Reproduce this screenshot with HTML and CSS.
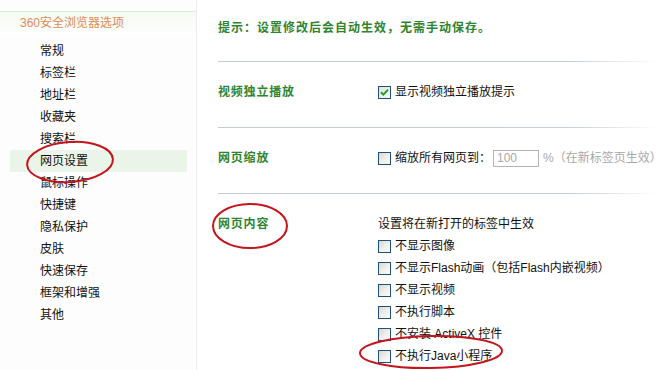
FILE: index.html
```html
<!DOCTYPE html>
<html lang="zh-CN">
<head>
<meta charset="utf-8">
<title>360安全浏览器选项</title>
<link rel="stylesheet" href="styles.css">
</head>
<body>
<div class="page">
  <aside class="sidebar">
    <div class="side-head">360安全浏览器选项</div>
    <ul class="menu">
      <li>常规</li>
      <li>标签栏</li>
      <li>地址栏</li>
      <li>收藏夹</li>
      <li>搜索栏</li>
      <li class="active">网页设置</li>
      <li>鼠标操作</li>
      <li>快捷键</li>
      <li>隐私保护</li>
      <li>皮肤</li>
      <li>快速保存</li>
      <li>框架和增强</li>
      <li>其他</li>
    </ul>
  </aside>
  <main class="content">
    <div class="tip">提示：设置修改后会自动生效，无需手动保存。</div>
    <section class="sec">
      <div class="label">视频独立播放</div>
      <div class="ctrl">
        <div class="row"><span class="cb checked"><svg viewBox="0 0 11 11" width="11" height="11"><path d="M2 5.2 L4.4 7.6 L9 2.6" fill="none" stroke="#21a121" stroke-width="2"/></svg></span>显示视频独立播放提示</div>
      </div>
    </section>
    <section class="sec">
      <div class="label">网页缩放</div>
      <div class="ctrl">
        <div class="row"><span class="cb"></span>缩放所有网页到：<span class="num">100</span><span class="muted">%（在新标签页生效）</span></div>
      </div>
    </section>
    <section class="sec">
      <div class="label">网页内容</div>
      <div class="ctrl">
        <div class="row">设置将在新打开的标签中生效</div>
        <div class="row"><span class="cb"></span>不显示图像</div>
        <div class="row"><span class="cb"></span>不显示Flash动画（包括Flash内嵌视频）</div>
        <div class="row"><span class="cb"></span>不显示视频</div>
        <div class="row"><span class="cb"></span>不执行脚本</div>
        <div class="row"><span class="cb"></span>不安装 ActiveX 控件</div>
        <div class="row"><span class="cb"></span>不执行Java小程序</div>
      </div>
    </section>
  </main>
  <svg class="marks" width="661" height="370" viewBox="0 0 661 370">
    <ellipse cx="70" cy="162" rx="43" ry="20" transform="rotate(-4 70 162)"/>
    <ellipse cx="250" cy="226" rx="37" ry="22"/>
    <ellipse cx="431" cy="352" rx="71" ry="16" transform="rotate(-1 431 352)"/>
  </svg>
</div>
</body>
</html>
```
FILE: styles.css
```css
html, body {
  margin: 0;
  padding: 0;
  background: #fff;
}
body {
  font-family: "Liberation Sans", "Noto Sans CJK SC", sans-serif;
  font-size: 12px;
  color: #111;
}
.page {
  position: relative;
  width: 661px;
  height: 370px;
  overflow: hidden;
  display: flex;
}
.sidebar {
  width: 197px;
  flex: none;
  border-right: 1px solid #ececec;
  padding-top: 11px;
  box-sizing: border-box;
  background: #fdfdfd;
}
.side-head {
  border-top: 1px solid #dcebdc;
  height: 23px;
  line-height: 23px;
  padding-left: 20px;
  color: #e08a56;
  background: linear-gradient(#f6faf4, #fbfdfa 70%, #fff);
}
.menu {
  list-style: none;
  margin: 5px 0 0 0;
  padding: 0;
}
.menu li {
  height: 21px;
  line-height: 21px;
  padding-top: 1px;
  padding-left: 30px;
  margin-left: 10px;
  width: 147px;
}
.menu li.active {
  background: #eaf4e8;
}
.content {
  padding-left: 21px;
  flex: 1;
}
.tip {
  margin-top: 18px;
  height: 20px;
  line-height: 20px;
  color: #2f852f;
  font-weight: bold;
  letter-spacing: 1px;
  margin-bottom: 23px;
}
.sec {
  width: 440px;
  border-top: 1px solid transparent;
  border-image: linear-gradient(to right, #c3ccd6, #c6ced8 80%, #fff 100%) 1;
  border-image-width: 1px 0 0 0;
  padding: 19px 0 24px 0;
  display: flex;
}
.label {
  width: 160px;
  flex: none;
  height: 21px;
  line-height: 21px;
  padding-top: 1px;
  color: #2f852f;
  font-weight: bold;
  letter-spacing: 0.8px;
}
.ctrl {
  display: flex;
  flex-direction: column;
  white-space: nowrap;
}
.row {
  height: 21px;
  line-height: 21px;
  padding-top: 1px;
  display: flex;
  align-items: center;
}
.cb {
  width: 11px;
  height: 11px;
  border: 1px solid #21507e;
  background: linear-gradient(135deg, #d8d8d2, #eeeeea 50%, #fbfbfa);
  margin-right: 4px;
  display: inline-flex;
  align-items: center;
  justify-content: center;
  flex: none;
}
.cb.checked {
  background: linear-gradient(135deg, #e2e2dc, #f8f8f6);
}
.num {
  display: inline-block;
  width: 41px;
  height: 15px;
  line-height: 15px;
  border: 1px solid #b5b5b5;
  color: #a8a8a8;
  padding-left: 3px;
  margin: 0 4px 0 2px;
  box-sizing: content-box;
  font-size: 12px;
  align-self: center;
}
.muted {
  color: #a8a8a8;
}
.marks {
  position: absolute;
  left: 0;
  top: 0;
  pointer-events: none;
}
.marks ellipse {
  fill: none;
  stroke: #c4141c;
  stroke-width: 2;
}
```
